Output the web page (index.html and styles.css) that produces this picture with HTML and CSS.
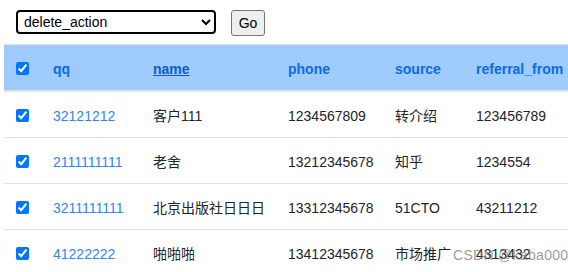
FILE: index.html
```html
<!DOCTYPE html>
<html lang="en">

<head>
    <title>客户列表</title>
    <meta charset="UTF-8">
    <meta name="viewport" content="width=device-width, initial-scale=1">
    <link rel="stylesheet" href="styles.css">
</head>

<body>
    <form class="actions">
        <select class="action-select">
            <option>delete_action</option>
        </select>
        <button type="button" class="go">Go</button>
    </form>
    <table class="table">
        <thead>
            <tr>
                <th class="c-check"><input type="checkbox" checked></th>
                <th class="c-qq">qq</th>
                <th class="c-name"><a href="#">name</a></th>
                <th class="c-phone">phone</th>
                <th class="c-source">source</th>
                <th class="c-ref">referral_from</th>
            </tr>
        </thead>
        <tbody>
            <tr>
                <td><input type="checkbox" checked></td>
                <td><a href="#">32121212</a></td>
                <td>客户111</td>
                <td>1234567809</td>
                <td>转介绍</td>
                <td>123456789</td>
            </tr>
            <tr>
                <td><input type="checkbox" checked></td>
                <td><a href="#">2111111111</a></td>
                <td>老舍</td>
                <td>13212345678</td>
                <td>知乎</td>
                <td>1234554</td>
            </tr>
            <tr>
                <td><input type="checkbox" checked></td>
                <td><a href="#">3211111111</a></td>
                <td>北京出版社日日日</td>
                <td>13312345678</td>
                <td>51CTO</td>
                <td>43211212</td>
            </tr>
            <tr>
                <td><input type="checkbox" checked></td>
                <td><a href="#">41222222</a></td>
                <td>啪啪啪</td>
                <td>13412345678</td>
                <td>市场推广</td>
                <td>4313432</td>
            </tr>
        </tbody>
    </table>
    <div class="watermark">CSDN @kaba000</div>
</body>

</html>
```

FILE: styles.css
```css
* {
    margin: 0;
    padding: 0;
    box-sizing: border-box;
}

body {
    font-family: "Liberation Sans", "Noto Sans CJK SC", sans-serif;
    font-size: 14px;
    line-height: 1.5;
    color: #212529;
    background: #fff;
    overflow: hidden;
}

.actions {
    display: flex;
    align-items: flex-start;
    gap: 15px;
    padding: 10px 0 8px 16px;
}

.action-select {
    width: 200px;
    height: 24px;
    border: 2px solid #000;
    border-radius: 4px;
    background: #fff;
    font-family: "Liberation Sans", sans-serif;
    font-size: 14px;
    color: #000;
    padding-left: 2px;
}

.go {
    width: 34px;
    height: 26px;
    border: 1px solid #767676;
    border-radius: 3px;
    background: #efefef;
    font-family: "Liberation Sans", sans-serif;
    font-size: 14px;
    color: #000;
}

.table {
    margin-left: 4px;
    width: 564px;
    border-collapse: collapse;
    table-layout: fixed;
}

.table th,
.table td {
    padding: 14px 12px 10px;
    text-align: left;
    vertical-align: top;
    border-top: 1px solid #dee2e6;
    white-space: nowrap;
}

.table thead th {
    background: #a0cbfd;
    border-bottom: 2px solid #dee2e6;
    color: #0b6be8;
    font-weight: bold;
}

.table thead th a {
    color: #0b5ed0;
}

.table td a {
    color: #2f86f6;
    text-decoration: none;
}

.table input {
    width: 13px;
    height: 13px;
    margin-top: 3px;
    vertical-align: top;
}

.c-check { width: 37px; }
.c-qq { width: 100px; }
.c-name { width: 135px; }
.c-phone { width: 107px; }
.c-source { width: 81px; }
.c-ref { width: 104px; }

.watermark {
    position: absolute;
    left: 453px;
    top: 245px;
    font-size: 14px;
    white-space: nowrap;
    color: rgba(120, 120, 120, 0.75);
    letter-spacing: 0.3px;
}
```
